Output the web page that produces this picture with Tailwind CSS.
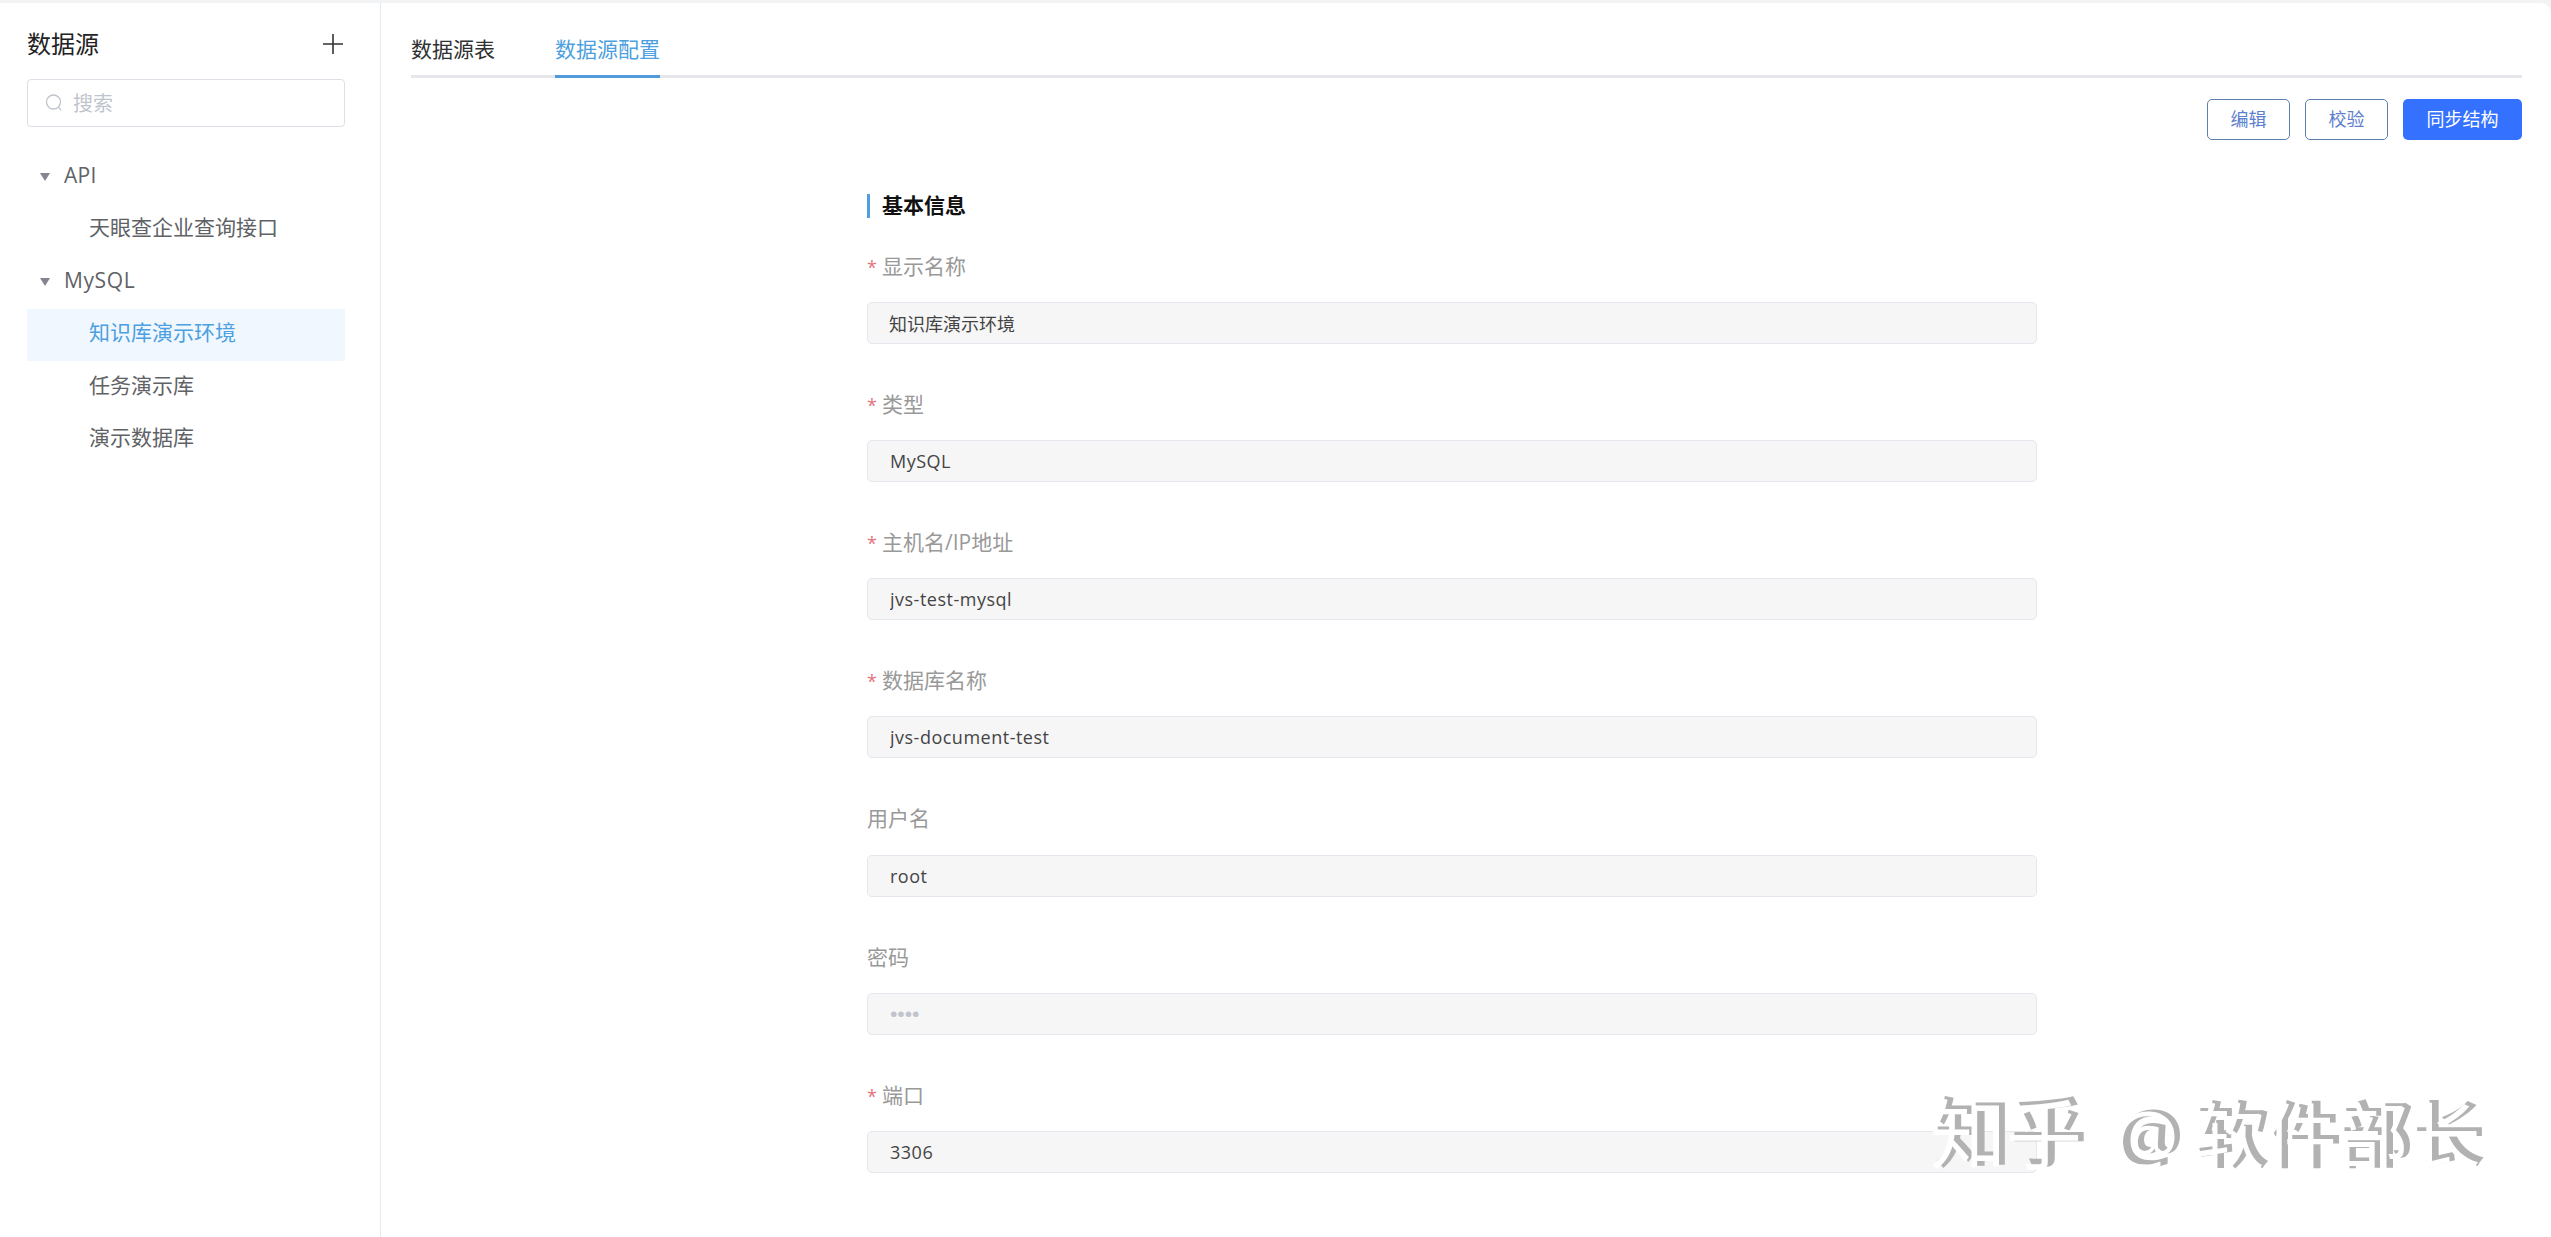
<!DOCTYPE html>
<html lang="zh-CN">
<head>
  <meta charset="UTF-8" />
  <meta name="viewport" content="width=device-width,initial-scale=1.0" />
  <title>数据源配置</title>
  <script src="https://cdn.jsdelivr.net/npm/@tailwindcss/browser@4"></script>
</head>

<body class="relative h-[1237px] overflow-hidden bg-[#f2f3f5] pt-[3px] font-['Open_Sans','Noto_Sans_CJK_SC',sans-serif] text-[21px] text-[#606266]">

  <div class="flex h-full rounded-tr-[10px] bg-white">

    <!-- SIDEBAR -->
    <aside class="w-[381px] shrink-0 border-r border-[#e8e9ec] pt-[21px] pl-[27px] pr-[35px]">
      <div class="flex h-10 items-center justify-between">
        <h1 class="text-[24px] text-[#222]">数据源</h1>
        <svg class="mr-[2px] size-5" viewBox="0 0 20 20" fill="none" stroke="#333" stroke-width="1.6"><path d="M10 0v20M0 10h20"/></svg>
      </div>

      <div class="mt-[15px] flex h-12 items-center gap-[10px] rounded-[4px] border border-[#dcdfe6] pl-[17px]">
        <svg class="size-[18px]" viewBox="0 0 18 18" fill="none" stroke="#c0c4cc" stroke-width="1.3"><circle cx="8.5" cy="8" r="7"/><path d="M13.5 13.2l2.6 3.2"/></svg>
        <span class="pt-[2px] text-[20px] text-[#c0c4cc]">搜索</span>
      </div>

      <ul class="mt-[24px]">
        <li class="flex h-[52.5px] items-center pb-1 pl-[13px]">
          <svg class="mt-1 mr-[14px] h-2 w-[10px]" viewBox="0 0 10 8" fill="#85858f"><path d="M0 0h10L5 8z"/></svg>
          <span class="tracking-[0.3px]">API</span>
        </li>
        <li class="flex h-[52.5px] items-center pb-1 pl-[62px]">天眼查企业查询接口</li>
        <li class="flex h-[52.5px] items-center pb-1 pl-[13px]">
          <svg class="mt-1 mr-[14px] h-2 w-[10px]" viewBox="0 0 10 8" fill="#85858f"><path d="M0 0h10L5 8z"/></svg>
          <span class="tracking-[0.6px]">MySQL</span>
        </li>
        <li class="flex h-[52.5px] items-center bg-[#f0f7ff] pb-1 pl-[62px] text-[#4c9fe0]">知识库演示环境</li>
        <li class="flex h-[52.5px] items-center pb-1 pl-[62px]">任务演示库</li>
        <li class="flex h-[52.5px] items-center pb-1 pl-[62px]">演示数据库</li>
      </ul>
    </aside>

    <!-- MAIN -->
    <main class="flex-1 pt-[21px] pl-[30px] pr-[29px]">
      <div class="flex h-[54px] gap-[60px] border-b-[3px] border-[#e6e7ea]">
        <div class="flex h-[54px] items-center border-b-[3px] border-transparent text-[#303133]">数据源表</div>
        <div class="flex h-[54px] items-center border-b-[3px] border-[#4f9bdc] text-[#4c9fe0]">数据源配置</div>
      </div>

      <div class="mt-[21px] flex justify-end gap-[15px] text-[18px]">
        <button class="h-[41px] w-[83px] rounded-[5px] border border-[#5c7fae] text-[#5d80cc]">编辑</button>
        <button class="h-[41px] w-[83px] rounded-[5px] border border-[#5c7fae] text-[#5d80cc]">校验</button>
        <button class="h-[41px] w-[119px] rounded-[5px] bg-[#3471ff] text-white">同步结构</button>
      </div>

      <form class="mt-[54px] ml-[456px] w-[1170px]">
        <h2 class="flex h-6 items-center border-l-[3px] border-[#4f9fe0] pl-3 font-bold text-[#111]">基本信息</h2>

        <div class="mt-[34px] flex flex-col gap-[46.17px]">
          <div>
            <label class="flex h-[29px] items-center text-[#999]"><span class="w-[15px] pt-[2px] text-[18px] text-[#e2747c]">*</span>显示名称</label>
            <input readonly value="知识库演示环境" class="mt-[21px] block h-[42px] w-full rounded-[5px] border border-[#e4e7ed] bg-[#f6f6f7] px-[21px] text-[18px] text-[#444]" />
          </div>
          <div>
            <label class="flex h-[29px] items-center text-[#999]"><span class="w-[15px] pt-[2px] text-[18px] text-[#e2747c]">*</span>类型</label>
            <input readonly value="MySQL" class="mt-[21px] block h-[42px] w-full rounded-[5px] border border-[#e4e7ed] bg-[#f6f6f7] px-[22px] text-[18px] tracking-[0.5px] text-[#444]" />
          </div>
          <div>
            <label class="flex h-[29px] items-center text-[#999]"><span class="w-[15px] pt-[2px] text-[18px] text-[#e2747c]">*</span>主机名/IP地址</label>
            <input readonly value="jvs-test-mysql" class="mt-[21px] block h-[42px] w-full rounded-[5px] border border-[#e4e7ed] bg-[#f6f6f7] px-[22px] text-[18px] tracking-[0.5px] text-[#444]" />
          </div>
          <div>
            <label class="flex h-[29px] items-center text-[#999]"><span class="w-[15px] pt-[2px] text-[18px] text-[#e2747c]">*</span>数据库名称</label>
            <input readonly value="jvs-document-test" class="mt-[21px] block h-[42px] w-full rounded-[5px] border border-[#e4e7ed] bg-[#f6f6f7] px-[22px] text-[18px] tracking-[0.5px] text-[#444]" />
          </div>
          <div>
            <label class="flex h-[29px] items-center text-[#999]">用户名</label>
            <input readonly value="root" class="mt-[21px] block h-[42px] w-full rounded-[5px] border border-[#e4e7ed] bg-[#f6f6f7] px-[22px] text-[18px] tracking-[0.5px] text-[#444]" />
          </div>
          <div>
            <label class="flex h-[29px] items-center text-[#999]">密码</label>
            <input readonly type="password" value="1234" class="mt-[21px] block h-[42px] w-full rounded-[5px] border border-[#e4e7ed] bg-[#f6f6f7] px-[22px] font-['Liberation_Sans',sans-serif] text-[21px] text-[#c0c4cc]" />
          </div>
          <div>
            <label class="flex h-[29px] items-center text-[#999]"><span class="w-[15px] pt-[2px] text-[18px] text-[#e2747c]">*</span>端口</label>
            <input readonly value="3306" class="mt-[21px] block h-[42px] w-full rounded-[5px] border border-[#e4e7ed] bg-[#f6f6f7] px-[22px] text-[18px] tracking-[0.5px] text-[#444]" />
          </div>
        </div>
      </form>
    </main>
  </div>

  <!-- watermark: grey text with a white copy laid over it -->
  <div class="absolute top-[1081px] left-[1935px] flex items-baseline text-[72px] leading-[102px] font-bold whitespace-nowrap text-[#b2b2b2]">
    <span data-text="知乎" class="relative text-[76px] after:absolute after:top-[2px] after:left-[-5px] after:font-normal after:text-white after:content-[attr(data-text)]">知乎</span>
    <span data-text="@" class="relative ml-[32px] after:absolute after:top-[2px] after:left-[-5px] after:font-normal after:text-white after:content-[attr(data-text)]">@</span>
    <span data-text="软件部长" class="relative ml-[14px] after:absolute after:top-[2px] after:left-[-5px] after:font-normal after:text-white after:content-[attr(data-text)]">软件部长</span>
  </div>

</body>
</html>
